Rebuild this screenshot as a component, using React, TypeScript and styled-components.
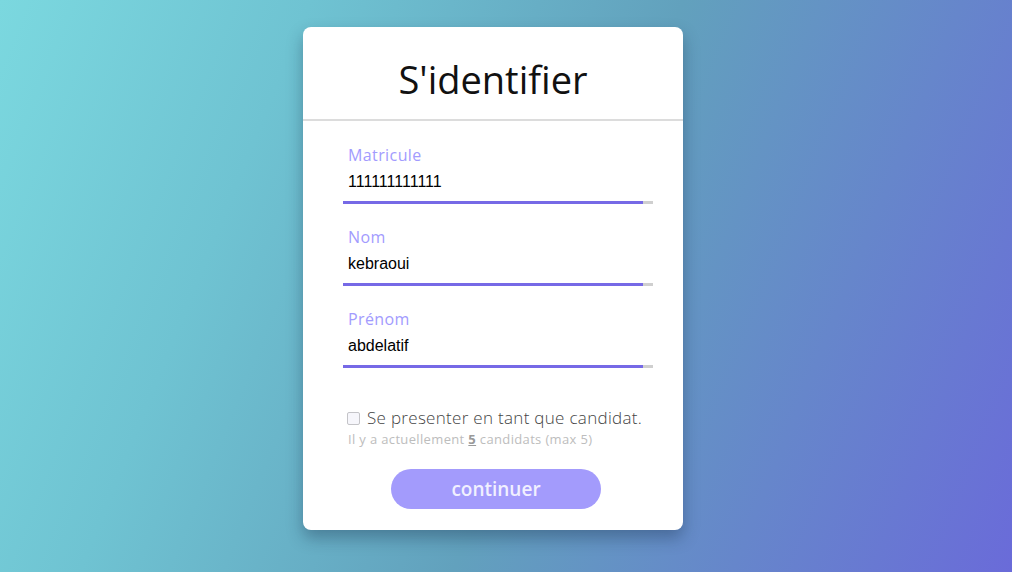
import React from "react";
import styled, { createGlobalStyle } from "styled-components";

const Global = createGlobalStyle`
  html, body { margin: 0; padding: 0; height: 100%; }
  body {
    font-family: "Open Sans", "Noto Sans", sans-serif;
    background: linear-gradient(112deg, #7bd8df 0%, #6fc3d2 25%, #62a1bd 55%, #6a6bd9 100%);
    min-height: 572px;
  }
  #root { min-height: 572px; }
`;

const Page = styled.div`
  min-height: 572px;
  box-sizing: border-box;
  padding: 27px 0 0 303px;
`;

const Card = styled.div`
  width: 380px;
  background: #ffffff;
  border-radius: 8px;
  box-shadow: 0 8px 16px rgba(20, 40, 70, 0.35);
  overflow: hidden;
`;

const Header = styled.div`
  height: 92px;
  display: flex;
  align-items: center;
  justify-content: center;
  border-bottom: 2px solid #dcdcdc;
`;

const Title = styled.h1`
  margin: 0;
  padding-top: 12px;
  font-family: "Open Sans", sans-serif;
  font-weight: 400;
  font-size: 38px;
  color: #111;
`;

const Body = styled.div`
  padding: 25px 30px 21px 40px;
  display: flex;
  flex-direction: column;
`;

const Field = styled.div`
  display: flex;
  flex-direction: column;
  margin-bottom: 24px;
`;

const Label = styled.label`
  padding-left: 5px;
  font-family: "Open Sans", sans-serif;
  font-size: 16px;
  line-height: 18px;
  letter-spacing: 0.4px;
  color: #a29bfe;
  font-weight: 400;
`;

const Input = styled.input`
  margin-top: 6px;
  padding: 0 0 0 5px;
  border: none;
  outline: none;
  background: transparent;
  height: 24px;
  line-height: 24px;
  font-family: "Liberation Sans", Arial, sans-serif;
  font-size: 16px;
  color: #000;
`;

const Track = styled.div`
  margin-top: 7px;
  height: 3px;
  background: #cfcfcf;
  display: flex;
`;

const Fill = styled.div<{ $pct: number }>`
  width: ${(p) => p.$pct}%;
  height: 100%;
  background: #7669e6;
`;

const CheckRow = styled.label`
  margin-top: 16px;
  display: flex;
  align-items: center;
  gap: 7px;
  padding-left: 4px;
  font-family: "Open Sans", sans-serif;
  font-weight: 300;
  font-size: 17px;
  line-height: 20px;
  letter-spacing: 0.3px;
  color: #444;
`;

const Box = styled.input`
  appearance: none;
  margin: 0;
  width: 13px;
  height: 13px;
  border: 1px solid #c4c4c8;
  border-radius: 2px;
  background: #f6f6fb;
  box-sizing: border-box;
`;

const Note = styled.div`
  margin-top: 3px;
  padding-left: 5px;
  font-family: "Open Sans", sans-serif;
  font-size: 13px;
  line-height: 16px;
  letter-spacing: 0.35px;
  color: #bdbdbd;
  font-weight: 400;
`;

const Count = styled.span`
  font-weight: 700;
  color: #9a9a9a;
  text-decoration: underline;
`;

const Button = styled.button`
  align-self: center;
  margin: 22px 4px 0 0;
  width: 210px;
  height: 40px;
  border: none;
  border-radius: 20px;
  background: #a39bfc;
  color: #f1f0ff;
  font-family: "Open Sans", sans-serif;
  font-size: 19px;
  font-weight: 600;
  cursor: pointer;
`;

const fields = [
  { label: "Matricule", value: "111111111111" },
  { label: "Nom", value: "kebraoui" },
  { label: "Prénom", value: "abdelatif" },
];

export default function App() {
  return (
    <>
      <Global />
      <Page>
        <Card>
          <Header>
            <Title>S'identifier</Title>
          </Header>
          <Body>
            {fields.map((f) => (
              <Field key={f.label}>
                <Label>{f.label}</Label>
                <Input defaultValue={f.value} />
                <Track>
                  <Fill $pct={96.8} />
                </Track>
              </Field>
            ))}
            <CheckRow>
              <Box type="checkbox" />
              Se presenter en tant que candidat.
            </CheckRow>
            <Note>
              Il y a actuellement <Count>5</Count> candidats (max 5)
            </Note>
            <Button>continuer</Button>
          </Body>
        </Card>
      </Page>
    </>
  );
}
